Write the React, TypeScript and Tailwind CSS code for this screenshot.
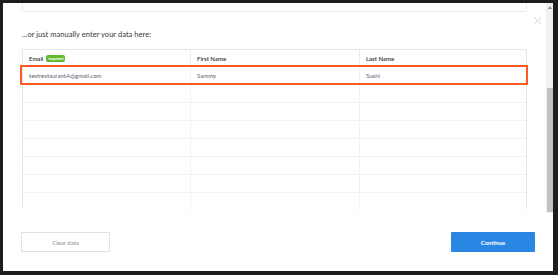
import React from 'react';

const rows = [
  { email: 'testrestaurantA@gmail.com', first: 'Sammy', last: 'Sushi' },
  ...Array.from({ length: 8 }, () => ({ email: '', first: '', last: '' })),
];

const CloseIcon: React.FC = () => (
  <svg width="9" height="9" viewBox="0 0 9 9" className="absolute left-[530px] top-[13px]">
    <path d="M1 1 L8 8 M8 1 L1 8" stroke="#cfcfcf" strokeWidth="0.9" fill="none" />
  </svg>
);

const App: React.FC = () => {
  return (
    <div
      className="w-[558px] h-[275px] bg-[#1d1d1d] pl-[3px] pt-[3px] pr-[5px] pb-[4px] overflow-hidden"
      style={{ fontFamily: 'Lato, "Open Sans", Arial, sans-serif' }}
    >
      <div className="relative w-[550px] h-[268px] bg-white flex flex-col">
        {/* scrollable body */}
        <div className="flex h-[210px]">
          <div className="relative flex-1 px-[19px] overflow-hidden">
            <div className="h-[9px] border-b border-x border-dotted border-[#d9d9d9]" />
            <p className="mt-[16px] text-[7.6px] leading-[12px] text-[#3a3a3a]">
              ...or just manually enter your data here:
            </p>
            <div className="mt-[9px] border border-[#e6e6e6] border-b-0">
              <div className="grid grid-cols-[167px_169px_1fr] h-[17px] border-b border-[#ececec]">
                <div className="flex items-center gap-[3px] pl-[6px] text-[6px] font-semibold text-[#333]">
                  Email
                  <span className="bg-[#5fba2e] text-white text-[4px] leading-[7px] px-[2px] rounded-[2px] font-bold">
                    required
                  </span>
                </div>
                <div className="flex items-center pl-[6px] border-l border-[#ececec] text-[6px] font-semibold text-[#333]">
                  First Name
                </div>
                <div className="flex items-center pl-[6px] border-l border-[#ececec] text-[6px] font-semibold text-[#333]">
                  Last Name
                </div>
              </div>
              {rows.map((r, i) => (
                <div
                  key={i}
                  className="relative grid grid-cols-[167px_169px_1fr] h-[18px] border-b border-[#f1f1f1] text-[6px] text-[#5d6272]"
                >
                  <div className="flex items-center pl-[6px]">{r.email}</div>
                  <div className="flex items-center pl-[6px] border-l border-[#f1f1f1]">{r.first}</div>
                  <div className="flex items-center pl-[6px] border-l border-[#f1f1f1]">{r.last}</div>
                  {i === 0 && (
                    <div className="absolute left-[-3px] right-[-2px] top-[-2px] bottom-[-1px] border-2 border-[#ff5a1f]" />
                  )}
                </div>
              ))}
            </div>
            <div className="absolute left-0 right-0 bottom-0 h-[10px] bg-gradient-to-b from-white/0 to-white" />
          </div>
          {/* scrollbar */}
          <div className="w-[7px] bg-[#f1f1f1] flex flex-col items-center">
            <div className="mt-[3px] w-0 h-0 border-x-[2px] border-x-transparent border-b-[3px] border-b-[#8a8a8a]" />
            <div className="mt-[79px] w-[6px] flex-1 mb-[1px] bg-[#c1c1c1]" />
          </div>
        </div>
        {/* footer */}
        <div className="flex justify-between items-start pt-[19px] pl-[18px] pr-[18px]">
          <button className="w-[89px] h-[20px] border border-[#e2e2e2] text-[6px] text-[#8a8a8a] bg-white">
            Clear data
          </button>
          <button className="w-[84px] h-[20px] bg-[#2986e2] text-[6px] font-bold text-white rounded-[1px]">
            Continue
          </button>
        </div>
        <CloseIcon />
      </div>
    </div>
  );
};

export default App;
